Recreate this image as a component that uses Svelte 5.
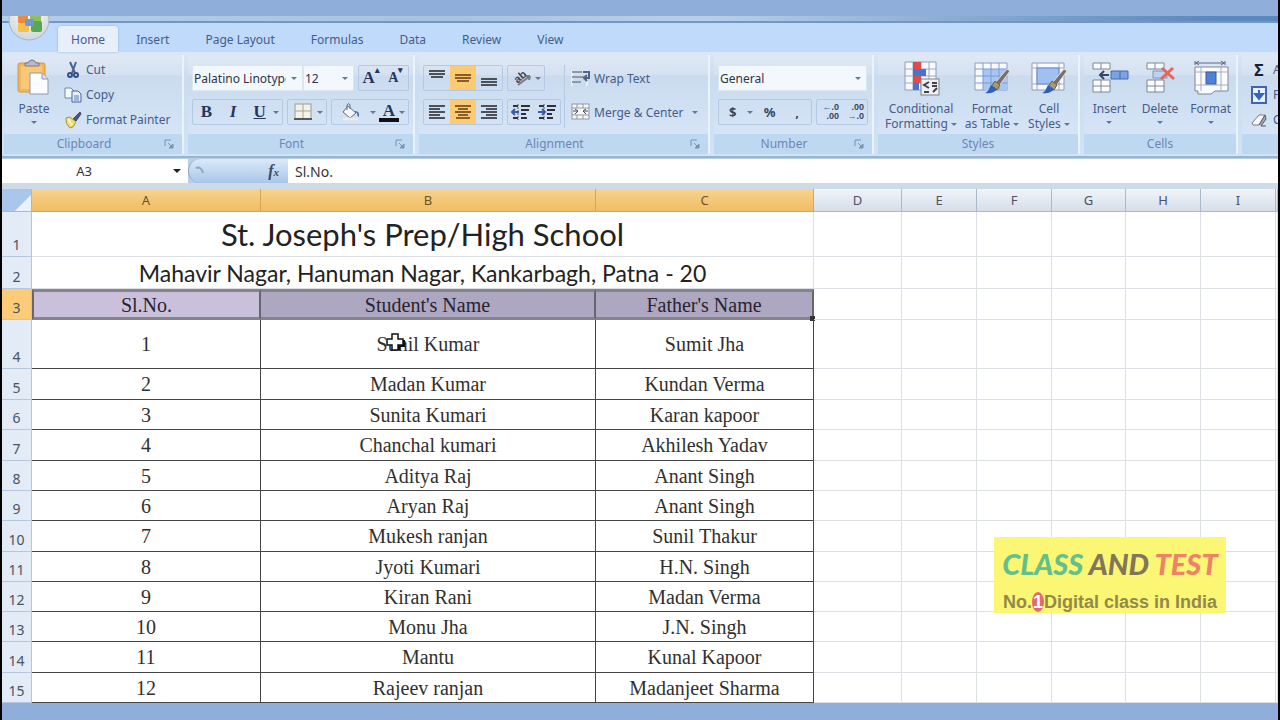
<script>
    const tabs = ['Home', 'Insert', 'Page Layout', 'Formulas', 'Data', 'Review', 'View'];
    const columns = [
        { name: 'A', width: 229 },
        { name: 'B', width: 335 },
        { name: 'C', width: 218 },
        { name: 'D', width: 88 },
        { name: 'E', width: 75 },
        { name: 'F', width: 75 },
        { name: 'G', width: 74 },
        { name: 'H', width: 75 },
        { name: 'I', width: 75 }
    ];
    const emptyColumns = ['D', 'E', 'F', 'G', 'H', 'I', ''];
    const students = [
        { name: 'Sunil Kumar', father: 'Sumit Jha', height: 49 },
        { name: 'Madan Kumar', father: 'Kundan Verma', height: 31 },
        { name: 'Sunita Kumari', father: 'Karan kapoor', height: 30 },
        { name: 'Chanchal kumari', father: 'Akhilesh Yadav', height: 31 },
        { name: 'Aditya Raj', father: 'Anant Singh', height: 30 },
        { name: 'Aryan Raj', father: 'Anant Singh', height: 30 },
        { name: 'Mukesh ranjan', father: 'Sunil Thakur', height: 31 },
        { name: 'Jyoti Kumari', father: 'H.N. Singh', height: 30 },
        { name: 'Kiran Rani', father: 'Madan Verma', height: 30 },
        { name: 'Monu Jha', father: 'J.N. Singh', height: 30 },
        { name: 'Mantu', father: 'Kunal Kapoor', height: 31 },
        { name: 'Rajeev ranjan', father: 'Madanjeet Sharma', height: 30 }
    ];

    let activeTab = $state('Home');
    let cellName = $state('A3');
    let formula = $state('Sl.No.');
</script>

{#snippet caret()}
    <span class="caret"></span>
{/snippet}

{#snippet lines(rows)}
    <svg width="18" height="20" viewBox="0 0 18 20">
        {#each rows as [x, y, w]}
            <rect {x} {y} width={w} height="2" fill="#4d5057" />
        {/each}
    </svg>
{/snippet}

{#snippet indent(flip)}
    <svg width="20" height="18" viewBox="0 0 20 18">
        <path d="M2 3h5M10 3h9M2 15h5M10 15h6M10 7h8M10 11h5" stroke="#2d3038" stroke-width="2" />
        <path d="M7 1v16" stroke="#555" stroke-dasharray="2 1" />
        <path d={flip ? 'M1 9h6M5 6l3 3-3 3' : 'M8 9H2M4 6L1 9l3 3'} fill="none" stroke="#3a5fa5" stroke-width="2" />
    </svg>
{/snippet}

{#snippet brush()}
    <path d="M35 10l3 2-11 15-4-3z" fill="#77706a" stroke="#e4e1dc" />
    <path d="M23 22l5 4-3 5-6-3z" fill="#aa9a68" stroke="#6d654a" />
    <path d="M19 26l6 4c-3 4-7 5-12 4 3-1 4-4 6-8z" fill="#2e61b5" />
{/snippet}

{#snippet group(title, body, launcher, cls)}
    <section class="group {cls}" aria-label={title}>
        <div class="group-body">{@render body()}</div>
        <div class="group-title">
            <span>{title}</span>
            {#if launcher}
                <button class="launcher" aria-label="{title} options">
                    <svg width="10" height="10" viewBox="0 0 10 10">
                        <path d="M1 7V1h6" fill="none" stroke="#7891b5" />
                        <path d="M4 4l3 3M9 5v4H5z" fill="#7891b5" stroke="#7891b5" />
                    </svg>
                </button>
            {/if}
        </div>
    </section>
{/snippet}

{#snippet clipboard()}
    <button class="large paste">
        <svg width="36" height="38" viewBox="0 0 36 38">
            <rect x="2" y="4" width="27" height="29" rx="2" fill="#efb65c" stroke="#d49a48" />
            <rect x="5" y="7" width="21" height="23" fill="#f7c878" />
            <path d="M9 7V4h3q1-3 4-3t4 3h3v3z" fill="#b8b9c5" stroke="#777b8c" />
            <path d="M14 14h12l6 6v15H14z" fill="#fbfcff" stroke="#8e9ab0" />
            <path d="M26 14v6h6" fill="#d9e2f0" stroke="#8e9ab0" />
        </svg>
        <span>Paste</span>
        {@render caret()}
    </button>
    <div class="stack">
        <button>
            <svg width="18" height="18" viewBox="0 0 18 18">
                <path d="M6 1l5 11M12 1L8 12" stroke="#4a6392" stroke-width="2" />
                <circle cx="6" cy="14" r="2" fill="none" stroke="#304f8c" stroke-width="2" />
                <circle cx="12" cy="14" r="2" fill="none" stroke="#304f8c" stroke-width="2" />
            </svg>
            Cut
        </button>
        <button>
            <svg width="18" height="18" viewBox="0 0 18 18">
                <path d="M1 2h6l3 3v7H1z" fill="#f4f8ff" stroke="#7286b0" />
                <path d="M8 5h6l3 3v8H8z" fill="#e7effc" stroke="#4762a0" />
                <path d="M10 10h5M10 12h5M10 14h5" stroke="#5c79b8" />
            </svg>
            Copy
        </button>
        <button>
            <svg width="18" height="18" viewBox="0 0 18 18">
                <path d="M16 1l1 2-5 7-3-2z" fill="#4b5878" stroke="#3e4965" />
                <path d="M2 7l4-1 6 5-3 5-3 1q-5-4-4-10z" fill="#f0dc72" stroke="#aa9440" />
                <path d="M4 8l4 6" stroke="#fff8c0" stroke-width="2" />
            </svg>
            Format Painter
        </button>
    </div>
{/snippet}

{#snippet font()}
    <div class="tools">
        <div class="combo font-name">
            <select aria-label="Font"><option>Palatino Linotype</option></select>
            {@render caret()}
        </div>
        <div class="combo font-size">
            <select aria-label="Font size"><option>12</option></select>
            {@render caret()}
        </div>
        <div class="set grow-set">
            <button class="letter" aria-label="Increase font size">A<sup>▴</sup></button>
            <button class="letter small" aria-label="Decrease font size">A<sup>▾</sup></button>
        </div>
    </div>
    <div class="tools">
        <div class="set style-set">
            <button class="letter"><b>B</b></button>
            <button class="letter"><i>I</i></button>
            <button class="letter"><u>U</u></button>
            {@render caret()}
        </div>
        <div class="set border-set">
            <button aria-label="Borders">
                <svg width="18" height="18" viewBox="0 0 18 18">
                    <rect x="1" y="1" width="16" height="15" fill="#f3f2e8" stroke="#9a9ba0" />
                    <path d="M9 1v15M1 8h16" stroke="#aaa791" />
                    <path d="M0 16h18" stroke="#55565c" stroke-width="2" />
                </svg>
            </button>
            {@render caret()}
        </div>
        <div class="set color-set">
            <button aria-label="Fill color">
                <svg width="20" height="18" viewBox="0 0 20 18">
                    <path d="M7 3l8 7-6 5-7-6z" fill="#f4f6fa" stroke="#5f6c82" />
                    <path d="M6 7V2q2-3 3 0v4" fill="none" stroke="#5f6c82" />
                    <path d="M13 8q6-1 5 6-2-1-2-4z" fill="#496ca8" />
                    <path d="M2 16h15" stroke="#e9ebed" stroke-width="3" />
                </svg>
            </button>
            {@render caret()}
            <button class="letter font-color" aria-label="Font color">A</button>
            {@render caret()}
        </div>
    </div>
{/snippet}

{#snippet alignment()}
    <div class="align-left">
        <div class="tools">
            <div class="set">
                <button aria-label="Top align">{@render lines([[1, 2, 16], [1, 5, 16], [3, 8, 12]])}</button>
                <button class="on" aria-label="Middle align">{@render lines([[1, 6, 16], [1, 9, 16], [3, 12, 12]])}</button>
                <button aria-label="Bottom align">{@render lines([[1, 10, 16], [1, 13, 16], [1, 16, 16]])}</button>
            </div>
            <div class="set orient-set">
                <button aria-label="Orientation">
                    <svg width="20" height="20" viewBox="0 0 20 20">
                        <path d="M6 17L18 8M18 8l-4 0M18 8l-1 4" fill="none" stroke="#777d87" stroke-width="2" />
                        <text x="3" y="13" transform="rotate(-40 8 11)">ab</text>
                    </svg>
                </button>
                {@render caret()}
            </div>
        </div>
        <div class="tools">
            <div class="set">
                <button aria-label="Align left">{@render lines([[1, 3, 16], [1, 6, 11], [1, 9, 16], [1, 12, 11], [1, 15, 16]])}</button>
                <button class="on" aria-label="Center">{@render lines([[1, 3, 16], [4, 6, 10], [1, 9, 16], [4, 12, 10], [2, 15, 14]])}</button>
                <button aria-label="Align right">{@render lines([[1, 3, 16], [6, 6, 11], [1, 9, 16], [6, 12, 11], [1, 15, 16]])}</button>
            </div>
            <div class="set">
                <button aria-label="Decrease indent">{@render indent(false)}</button>
                <button aria-label="Increase indent">{@render indent(true)}</button>
            </div>
        </div>
    </div>
    <div class="align-right">
        <button>
            <svg width="20" height="20" viewBox="0 0 20 20">
                <path d="M1 2v16M16 2v16" stroke="#e8eef7" stroke-width="2" />
                <path d="M1 4h10M1 9h12M1 14h9" stroke="#8f98a3" stroke-width="2" />
                <path d="M12 4h6v6h-4m2-3l-3 3 3 3" fill="none" stroke="#4f6288" stroke-width="2" />
            </svg>
            Wrap Text
        </button>
        <button>
            <svg width="20" height="20" viewBox="0 0 20 20">
                <rect x="1" y="2" width="17" height="15" fill="#f7f8fa" stroke="#90979f" />
                <path d="M6 2v4M12 2v4M6 13v4M12 13v4M1 6h17M1 13h17" stroke="#90979f" />
                <path d="M2 9h4M4 7l3 2-3 3M17 9h-4M15 7l-3 2 3 3" fill="none" stroke="#414a5c" />
            </svg>
            Merge &amp; Center
            {@render caret()}
        </button>
    </div>
{/snippet}

{#snippet number()}
    <div class="combo number-format">
        <select aria-label="Number format"><option>General</option></select>
        {@render caret()}
    </div>
    <div class="tools">
        <div class="set currency-set">
            <button><b>$</b></button>
            {@render caret()}
            <button><b>%</b></button>
            <button><b>,</b></button>
        </div>
        <div class="set">
            <button class="decimal" aria-label="Increase decimal"><span><em>←</em>.0</span><span>.00</span></button>
            <button class="decimal" aria-label="Decrease decimal"><span>.00</span><span><em>→</em>.0</span></button>
        </div>
    </div>
{/snippet}

{#snippet styles()}
    <button class="large conditional">
        <svg width="40" height="38" viewBox="0 0 40 38">
            <path d="M4 3h31v28H4z" fill="#f8faff" stroke="#8c9cb8" />
            <path d="M4 10h31M4 17h31M4 24h31M12 3v28M20 3v28M28 3v28" stroke="#9dabc3" />
            <path d="M12 3h8v7h-8zM12 17h8v7h-8z" fill="#dd4c4c" />
            <path d="M12 10h13v7H12zM12 24h6v7h-6z" fill="#4774cd" />
            <rect x="20" y="20" width="18" height="16" fill="#eff0f2" stroke="#7e828a" />
            <path d="M28 23l-5 3 5 3M31 24h5M31 27h5M23 33h5M32 33l4-4" fill="none" stroke="#3e434d" stroke-width="2" />
        </svg>
        <span>Conditional</span>
        <span>Formatting {@render caret()}</span>
    </button>
    <button class="large as-table">
        <svg width="40" height="38" viewBox="0 0 40 38">
            <path d="M3 4h32v27H3z" fill="#f8faff" stroke="#8c9cb8" />
            <path d="M11 10h24v21H11z" fill="#a9c5f3" />
            <path d="M3 10h32M3 17h32M3 24h32M11 4v27M19 4v27M27 4v27" stroke="#7e9bcd" />
            {@render brush()}
        </svg>
        <span>Format</span>
        <span>as Table {@render caret()}</span>
    </button>
    <button class="large cell-styles">
        <svg width="40" height="38" viewBox="0 0 40 38">
            <path d="M3 4h32v27H3z" fill="#f8faff" stroke="#8c9cb8" />
            <path d="M3 9h32M3 25h32M8 4v27M30 4v27" stroke="#9dabc3" />
            <rect x="8" y="9" width="22" height="16" fill="#a2bff2" stroke="#6387ca" />
            {@render brush()}
        </svg>
        <span>Cell</span>
        <span>Styles {@render caret()}</span>
    </button>
{/snippet}

{#snippet cells()}
    <button class="large">
        <svg width="40" height="38" viewBox="0 0 40 38">
            <path d="M4 4h17v6H4zM4 21h17v12H4zM12 4v6M12 21v12M4 27h17" fill="#fbfcff" stroke="#7f8795" />
            <path d="M22 12h17v8H22z" fill="#7ba2e4" stroke="#4768a8" />
            <path d="M31 12v8" stroke="#4768a8" />
            <path d="M20 16h-8M15 12l-4 4 4 4" fill="none" stroke="#37445f" stroke-width="2" />
        </svg>
        <span>Insert</span>
        {@render caret()}
    </button>
    <button class="large">
        <svg width="40" height="38" viewBox="0 0 40 38">
            <path d="M7 4h17v6H7zM7 21h17v12H7zM15 4v6M15 21v12M7 27h17" fill="#fbfcff" stroke="#7f8795" />
            <path d="M13 12h14v7H13z" fill="#bfd3f0" stroke="#7897c5" />
            <path d="M22 9l12 11M33 9L21 20" stroke="#e56757" stroke-width="3" />
        </svg>
        <span>Delete</span>
        {@render caret()}
    </button>
    <button class="large">
        <svg width="40" height="38" viewBox="0 0 40 38">
            <path d="M4 2v4M34 2v4M4 4h30M8 2l-3 2 3 2M30 2l3 2-3 2" fill="none" stroke="#596881" />
            <path d="M4 8h33v24H24l-4 3H7V32H4z" fill="#fafbfd" stroke="#7f8795" />
            <path d="M4 13h33M4 26h33M10 8v24M30 8v24" stroke="#a5aebc" />
            <rect x="15" y="13" width="10" height="12" fill="#517fdc" stroke="#365da8" />
        </svg>
        <span>Format</span>
        {@render caret()}
    </button>
{/snippet}

{#snippet editing()}
    <div class="stack">
        <button><b class="sigma">Σ</b>AutoSum</button>
        <button>
            <svg width="16" height="18" viewBox="0 0 16 18">
                <rect x="1" y="1" width="14" height="16" fill="#e8f1ff" stroke="#4264b0" stroke-width="2" />
                <path d="M8 4v7M4 8l4 5 4-5z" fill="#3762bd" stroke="#3762bd" stroke-width="2" />
            </svg>
            Fill
        </button>
        <button>
            <svg width="16" height="16" viewBox="0 0 16 16">
                <path d="M1 11l7-8h6l-6 10H2z" fill="#f8f8fa" stroke="#777e8c" />
                <path d="M8 13l6-10 1 4-5 7h5" fill="#a3a9b4" stroke="#555c6b" />
            </svg>
            Clear
        </button>
    </div>
{/snippet}

<main class="screen">
    <div class="band top"></div>
    <div class="title-bar"></div>

    <nav class="tabs">
        <button class="office" aria-label="Office">
            <svg width="46" height="28" viewBox="0 0 46 28">
                <defs>
                    <radialGradient id="orb" cx="50%" cy="30%" r="70%">
                        <stop offset="0" stop-color="#fffdf4" />
                        <stop offset="1" stop-color="#cfd6dd" />
                    </radialGradient>
                </defs>
                <circle cx="25" cy="4" r="20" fill="url(#orb)" stroke="#a9b4c0" />
                <path d="M14 0h10v7H14z" fill="#e98a3e" />
                <path d="M26 0h11v6H26z" fill="#8fbf5b" />
                <rect x="14" y="7" width="11" height="9" rx="2" fill="#f4c04a" />
                <rect x="27" y="5" width="11" height="11" rx="2" fill="#5aa657" />
                <rect x="21" y="3" width="9" height="7" rx="2" fill="#6a9ad3" />
            </svg>
        </button>
        {#each tabs as tab}
            <button class="tab" class:active={tab === activeTab} onclick={() => (activeTab = tab)}>{tab}</button>
        {/each}
    </nav>

    <div class="ribbon">
        {@render group('Clipboard', clipboard, true, 'clipboard')}
        {@render group('Font', font, true, 'font')}
        {@render group('Alignment', alignment, true, 'alignment')}
        {@render group('Number', number, true, 'number')}
        {@render group('Styles', styles, false, 'styles')}
        {@render group('Cells', cells, false, 'cells')}
        {@render group('', editing, false, 'editing')}
    </div>

    <div class="formula-bar">
        <input class="name-box" aria-label="Name box" bind:value={cellName} />
        <button class="name-arrow" aria-label="Names"><span class="caret"></span></button>
        <button class="fx" aria-label="Insert function">
            <svg width="12" height="12" viewBox="0 0 12 12">
                <path d="M2 3q5-2 7 5" fill="none" stroke="#8ba6cc" stroke-width="2" />
            </svg>
            <i>f<small>x</small></i>
        </button>
        <input class="formula" aria-label="Formula" bind:value={formula} />
    </div>

    <div class="sheet">
        <table>
            <colgroup>
                <col style="width: 30px" />
                {#each columns as column}
                    <col style="width: {column.width}px" />
                {/each}
                <col />
            </colgroup>
            <thead>
                <tr>
                    <th class="corner"></th>
                    {#each columns as column, i}
                        <th class:picked={i < 3}>{column.name}</th>
                    {/each}
                    <th></th>
                </tr>
            </thead>
            <tbody>
                <tr style="height: 45px">
                    <th>1</th>
                    <td class="school" colspan="3">St. Joseph's Prep/High School</td>
                    {#each emptyColumns as _}<td></td>{/each}
                </tr>
                <tr style="height: 32px">
                    <th>2</th>
                    <td class="address" colspan="3">Mahavir Nagar, Hanuman Nagar, Kankarbagh, Patna - 20</td>
                    {#each emptyColumns as _}<td></td>{/each}
                </tr>
                <tr class="selected" style="height: 31px">
                    <th>3</th>
                    <td class="data first">Sl.No.</td>
                    <td class="data">Student's Name</td>
                    <td class="data last">Father's Name<span class="handle"></span></td>
                    {#each emptyColumns as _}<td></td>{/each}
                </tr>
                {#each students as student, i}
                    <tr style="height: {student.height}px">
                        <th>{i + 4}</th>
                        <td class="data">{i + 1}</td>
                        <td class="data">
                            {student.name}
                            {#if i === 0}
                                <svg class="pointer" width="20" height="20" viewBox="0 0 20 20">
                                    <path d="M7 2h6v5h5v6h-5v5H7v-5H2V7h5z" fill="#fff" stroke="#111" stroke-width="1.5" />
                                    <path d="M14 18v-4h5V8" fill="none" stroke="#111" stroke-width="2" />
                                </svg>
                            {/if}
                        </td>
                        <td class="data">{student.father}</td>
                        {#each emptyColumns as _}<td></td>{/each}
                    </tr>
                {/each}
            </tbody>
        </table>

        <aside class="badge">
            <p class="brand"><span class="green">CLASS</span> <span class="brown">AND</span> <span class="red">TEST</span></p>
            <p class="slogan">No.<span class="one">1</span>Digital class in India</p>
        </aside>
    </div>
    <div class="band bottom"></div>
</main>

<style>
    :global(body) {
        margin: 0;
        background: #000;
    }

    .screen {
        min-height: 100vh;
        margin: 0 2px;
        display: flex;
        flex-direction: column;
        overflow: hidden;
        background: #8fafda;
        font-family: "Noto Sans", "Open Sans", sans-serif;
        font-size: 12px;
        color: #465c8b;
    }

    button, input, select {
        font: inherit;
        color: inherit;
        border: none;
        background: none;
        padding: 0;
        margin: 0;
        outline: none;
    }

    button {
        display: flex;
        align-items: center;
        justify-content: center;
        white-space: nowrap;
    }

    svg {
        display: block;
        flex: none;
    }

    .caret {
        display: inline-block;
        flex: none;
        border: 3px solid transparent;
        border-top-color: #66769a;
        border-bottom: none;
        vertical-align: middle;
    }

    .band {
        background: #8fafda;
    }

    .band.top {
        height: 16px;
    }

    .band.bottom {
        flex: 1;
    }

    .title-bar {
        height: 5px;
        border-bottom: 2px solid #7397c4;
        background: linear-gradient(90deg, #b4cde8, #a9c2de 35%, #b9d0e8 55%, #5b88bd 95%);
    }

    /* ---- tabs ---- */
    .tabs {
        position: relative;
        display: flex;
        align-items: flex-end;
        height: 29px;
        padding-left: 56px;
        background: #bfdafb;
    }

    .office {
        position: absolute;
        left: 2px;
        top: -7px;
    }

    .tab {
        height: 26px;
        padding: 0 18px;
    }

    .tab.active {
        padding: 0 13px;
        background: #e6effa;
        border-radius: 3px 3px 0 0;
        box-shadow: 0 0 2px #86a5d0;
    }

    /* ---- ribbon ---- */
    .ribbon {
        display: flex;
        gap: 4px;
        height: 99px;
        padding: 3px 0 2px 2px;
        overflow: hidden;
        border-bottom: 2px solid #9ab6cf;
        background: linear-gradient(#dce7f5, #cbdcf0 25%, #d3e3f5);
    }

    .group {
        flex: none;
        display: flex;
        flex-direction: column;
        box-sizing: border-box;
        border-right: 2px solid #e9f3fd;
        background: linear-gradient(#dfe8f5, #d5e1f1 20%, #cadbef 21%, #d9e8f8);
    }

    .group.clipboard { width: 180px; }
    .group.font { width: 227px; }
    .group.alignment { width: 291px; }
    .group.number { width: 160px; }
    .group.styles { width: 202px; }
    .group.cells { width: 154px; }
    .group.editing { width: 200px; }

    .group-body {
        flex: 1;
        display: flex;
    }

    .group-title {
        display: flex;
        align-items: center;
        height: 20px;
        background: #bfd8f1;
        color: #6d87b2;
        line-height: 18px;
    }

    .group-title span {
        flex: 1;
        text-align: center;
    }

    .launcher {
        margin-right: 8px;
    }

    .large {
        flex-direction: column;
        justify-content: flex-start;
        padding-top: 4px;
        line-height: 16px;
    }

    .large svg {
        margin-bottom: 4px;
    }

    .large > .caret {
        margin-top: 4px;
    }

    .paste {
        width: 60px;
    }

    .stack {
        display: flex;
        flex-direction: column;
        align-items: flex-start;
        padding-top: 2px;
    }

    .stack button {
        height: 25px;
        gap: 4px;
    }

    .font .group-body, .number .group-body {
        flex-direction: column;
        gap: 8px;
        padding: 10px 4px 0 4px;
    }

    .tools {
        display: flex;
        gap: 4px;
    }

    .combo {
        position: relative;
        display: flex;
        box-sizing: border-box;
        height: 26px;
        border: 1px solid #dbe6f3;
        background: #f3f8fe;
        color: #2e3444;
    }

    .combo select {
        width: 100%;
        padding-left: 1px;
        padding-right: 16px;
        appearance: none;
        overflow: hidden;
    }

    .combo .caret {
        position: absolute;
        right: 5px;
        top: 11px;
        pointer-events: none;
    }

    .font-name { width: 111px; }
    .font-size { width: 51px; margin-left: -4px; }
    .grow-set { flex: 1; }
    .style-set { width: 91px; }
    .border-set { width: 40px; }
    .color-set { flex: 1; }
    .orient-set { width: 38px; }
    .currency-set { width: 94px; }

    .set {
        display: flex;
        align-items: center;
        box-sizing: border-box;
        height: 26px;
        border: 1px solid #b5c9e4;
        border-radius: 2px;
    }

    .set button {
        flex: 1;
        height: 24px;
        min-width: 26px;
    }

    .grow-set button, .style-set button, .color-set button, .border-set button, .currency-set button {
        min-width: 0;
    }

    .orient-set button {
        min-width: 24px;
    }

    .orient-set svg {
        overflow: visible;
    }

    .set .caret {
        margin-right: 3px;
    }

    .set .on {
        background: #fbcb73;
    }

    .set .on :global(rect) {
        fill: #8a5c28;
    }

    .set text {
        font: bold 11px "Liberation Sans", sans-serif;
        fill: #3e434d;
    }

    .letter {
        font-family: "Liberation Serif", serif;
        font-size: 17px;
        font-weight: bold;
        color: #26365a;
    }

    .letter.small {
        font-size: 14px;
    }

    .letter sup {
        font-size: 9px;
        line-height: 9px;
        align-self: flex-start;
    }

    .color-set .font-color {
        flex: none;
        width: 20px;
        height: 19px;
        line-height: 15px;
        border-bottom: 4px solid #101018;
    }

    .alignment .group-body {
        padding-top: 10px;
    }

    .align-left, .align-right {
        display: flex;
        flex-direction: column;
        gap: 8px;
    }

    .align-left {
        padding-left: 4px;
        width: 141px;
        margin-bottom: 6px;
        border-right: 1px solid #b5c9e4;
    }

    .align-right {
        align-items: flex-start;
        padding-left: 6px;
    }

    .align-right button {
        height: 26px;
        gap: 3px;
    }

    .align-right .caret {
        margin-left: 5px;
    }

    .number-format {
        width: 149px;
    }

    .number .set {
        color: #39455e;
        font-size: 13px;
    }

    .set .decimal {
        flex-direction: column;
        font: bold 9px "Liberation Sans", sans-serif;
        line-height: 9px;
        align-items: flex-end;
        padding-right: 3px;
        min-width: 25px;
    }

    .decimal em {
        font-style: normal;
        color: #3c64b8;
    }

    .styles .large {
        line-height: 15px;
    }

    .conditional { width: 86px; }
    .as-table { width: 56px; }
    .cell-styles { width: 58px; }

    .cells .large {
        flex: 1;
    }

    .editing .stack {
        padding-left: 9px;
    }

    .editing .stack button {
        gap: 6px;
    }

    .sigma {
        width: 16px;
        font-size: 16px;
        color: #182034;
    }

    /* ---- formula bar ---- */
    .formula-bar {
        display: flex;
        height: 24px;
        padding-top: 1px;
        border-bottom: 6px solid #cddbe6;
        background: #b7cfe4;
        color: #343434;
    }

    .formula-bar input {
        background: #fff;
    }

    .name-box {
        width: 164px;
        text-align: center;
        font-size: 13px;
    }

    .name-arrow {
        width: 22px;
        background: #fff;
    }

    .name-arrow .caret {
        border-width: 4px;
        border-bottom: none;
        border-top-color: #222;
    }

    .fx {
        width: 100px;
        justify-content: space-between;
        padding: 0 9px 0 5px;
        border-radius: 12px 0 0 12px;
        border-left: 1px solid #8da8cb;
        box-sizing: border-box;
        background: linear-gradient(#dce9f8, #a9c6ea);
        font-family: "Liberation Serif", serif;
        font-size: 16px;
        font-weight: bold;
        color: #3c4a66;
    }

    .fx small {
        font-size: 11px;
    }

    .formula {
        flex: 1;
        min-width: 0;
        padding-left: 7px;
        font-size: 14px;
    }

    /* ---- sheet ---- */
    .sheet {
        position: relative;
        background: #fff;
    }

    table {
        width: 100%;
        table-layout: fixed;
        border-collapse: separate;
        border-spacing: 0;
    }

    th, td {
        position: relative;
        box-sizing: border-box;
        padding: 0;
        border-right: 1px solid #dcdfe4;
        border-bottom: 1px solid #dcdfe4;
        text-align: center;
        white-space: nowrap;
    }

    thead th {
        height: 23px;
        border-color: #a9b8cc;
        background: linear-gradient(#f1f4f9, #d6deea);
        font-size: 13px;
        font-weight: normal;
        color: #4b5361;
    }

    thead .picked {
        border-color: #d8a556;
        background: linear-gradient(#f8d391, #f0bd62);
        color: #6c5526;
    }

    thead .corner {
        background: linear-gradient(135deg, #a9c7ec 68%, #eaf3fd 69%);
    }

    tbody th {
        padding-bottom: 2px;
        border-color: #b5c5da;
        background: #e2ebf6;
        font-size: 14px;
        line-height: 18px;
        font-weight: normal;
        vertical-align: bottom;
        color: #4b5361;
    }

    .school, .address {
        font-family: Lato, sans-serif;
        color: #222;
    }

    .school {
        font-size: 31px;
        line-height: 40px;
    }

    .address {
        font-size: 23px;
        line-height: 28px;
    }

    .data {
        border-right-color: #454545;
        border-bottom-color: #454545;
        font-family: "Liberation Serif", serif;
        font-size: 20px;
        line-height: 24px;
        color: #303030;
    }

    .selected th {
        background: #fbcb78;
    }

    .selected .data {
        border-top: 3px solid #85838c;
        border-bottom: 3px solid #85838c;
        border-right: 2px solid #67656e;
        background: #ada7c2;
        line-height: 22px;
        color: #28242f;
    }

    .selected .first {
        border-left: 2px solid #67656e;
        background: #cbc0dc;
    }

    .handle {
        position: absolute;
        right: -3px;
        bottom: -4px;
        width: 5px;
        height: 5px;
        background: #333;
    }

    .pointer {
        position: absolute;
        left: 124px;
        top: 12px;
    }

    .badge {
        position: absolute;
        right: 52px;
        top: 348px;
        width: 232px;
        height: 76px;
        background: #fbf774;
        white-space: nowrap;
        text-align: center;
    }

    .badge p {
        margin: 0;
    }

    .brand {
        font: italic 900 29px Lato, sans-serif;
        line-height: 54px;
    }

    .green { color: #63c08c; }
    .brown { color: #82755c; }
    .red { color: #ee8268; }

    .slogan {
        font: bold 18px "Liberation Sans", sans-serif;
        line-height: 22px;
        color: #92894a;
    }

    .one {
        padding: 0 1px;
        border-radius: 50%;
        background: #e5686c;
        color: #fff;
    }
</style>
